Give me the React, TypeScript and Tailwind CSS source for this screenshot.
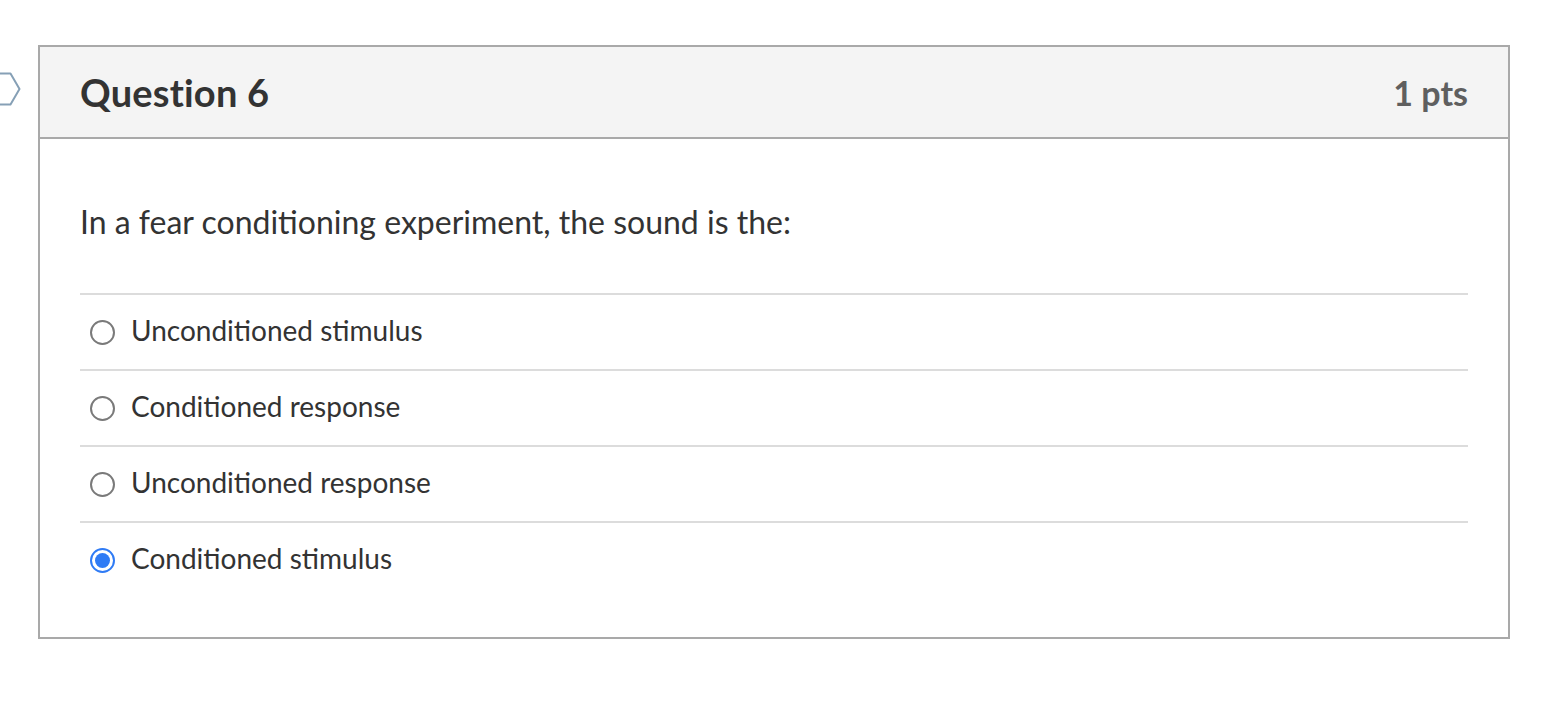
import React from "react";

const answers = [
    { label: "Unconditioned stimulus", checked: false },
    { label: "Conditioned response", checked: false },
    { label: "Unconditioned response", checked: false },
    { label: "Conditioned stimulus", checked: true },
];

function Radio({ checked }: { checked: boolean }) {
    if (checked) {
        return (
            <span className="flex items-center justify-center w-[25px] h-[25px] rounded-full border-2 border-[#2f7bf5] bg-white shrink-0">
                <span className="w-[15px] h-[15px] rounded-full bg-[#2f7bf5]" />
            </span>
        );
    }
    return <span className="w-[25px] h-[25px] rounded-full border-2 border-[#7a7a7a] bg-white shrink-0" />;
}

export default function App() {
    return (
        <div className="min-h-[708px] bg-white pt-[45px] flex text-[#333]" style={{ fontFamily: "Lato, 'Open Sans', sans-serif" }}>
            <div className="w-[38px] shrink-0 pt-[27px]">
                <svg width="38" height="36" viewBox="0 0 38 36" className="block">
                    <path d="M-10 1.5 H10.5 L19.5 17 L10.5 32.5 H-10" fill="none" stroke="#86a0b6" strokeWidth="2" strokeLinejoin="round" />
                </svg>
            </div>

            <div className="w-[1472px] border-2 border-[#a9a9a9] self-start">
                <div className="h-[92px] bg-[#f4f4f4] border-b-2 border-[#a9a9a9] flex items-center justify-between pl-[40px] pr-[40px]">
                    <h2 className="text-[38px] font-bold tracking-[0.2px]">Question 6</h2>
                    <span className="text-[34px] font-bold text-[#5f5f5f]">1 pts</span>
                </div>

                <div className="px-[40px] pt-[65px] pb-[40px]">
                    <p className="text-[32px] leading-[36px] mb-[53px]">In a fear conditioning experiment, the sound is the:</p>
                    <div>
                        {answers.map((a) => (
                            <div key={a.label} className="h-[76px] border-t-2 border-[#dcdcdc] flex items-center gap-[16px] pl-[10px]">
                                <Radio checked={a.checked} />
                                <span className="text-[28px] pb-[4px]">{a.label}</span>
                            </div>
                        ))}
                    </div>
                </div>
            </div>
        </div>
    );
}
